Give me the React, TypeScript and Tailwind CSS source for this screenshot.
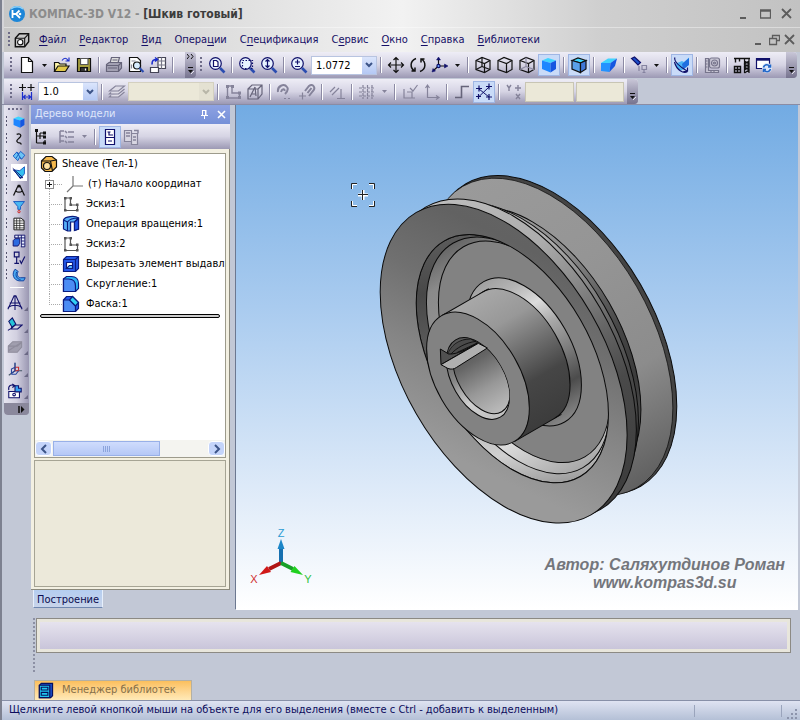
import { ReactNode } from "react";
import clsx from "clsx";

const NAVY = "#10106a";
const GRAY = "#85839a";

// ---- icons, all on an 18x18 grid ----

function Svg({ children, size = 18, color = "#111" }: { children: ReactNode; size?: number; color?: string }) {
  return (
    <svg width={size} height={size} viewBox="0 0 18 18" fill="none" stroke={color} strokeWidth="1.2" className="shrink-0">
      {children}
    </svg>
  );
}

function Lens({ children }: { children?: ReactNode }) {
  return (
    <Svg color={NAVY}>
      <circle cx="7.5" cy="7.5" r="5.8" fill="#e8f2ff" />
      <path d="M12 12l4.5 4.5" strokeWidth="2.6" stroke="#2a4cb0" />
      {children}
    </Svg>
  );
}

// Box seen from the upper left: long front face on the left, narrow side on the right.
function CubeWire({ hidden }: { hidden?: "solid" | "thin" }) {
  return (
    <Svg>
      <path d="M2 4.500L8 1.500l8 3v9l-5.500 3L2 13.500z" />
      <path d="M2 4.500l8.500 3 5.500-3M10.500 7.500v9" />
      {hidden && <path d="M8 1.500v9L2 13.500M8 10.500l8 3" stroke={hidden === "thin" ? "#8a88a0" : "#111"} />}
    </Svg>
  );
}

function CubeSolid({ edges }: { edges?: boolean }) {
  const s = edges ? "#111" : "none";
  return (
    <Svg>
      <path d="M2 4.5L8 2l8 2.5L10.500 7z" fill="#3fd4ff" stroke={s} />
      <path d="M2 4.500l8.500 2.500v9.500L2 13z" fill={edges ? "#5aa0e8" : "#1e86ff"} stroke={s} />
      <path d="M10.500 7L16 4.500V13l-5.500 3.500z" fill={edges ? "#3f78d8" : "#1557e0"} stroke={s} />
    </Svg>
  );
}

const icons = {
  newDoc: <Svg><path d="M3.500 1.500h7l4 4v11h-11z" fill="#fff" /><path d="M10.500 1.500v4h4" /></Svg>,
  open: (
    <Svg>
      <path d="M1.500 15.500v-9h4l1.500 1.500h6v2" fill="#fff6a8" />
      <path d="M1.500 15.500l3.500-5.500h11l-3.500 5.500z" fill="#e0c84a" />
      <path d="M9 4.500c2-3 4.500-3 6 0M16 1.500v3.500h-3.500" stroke="#1c2ecc" />
    </Svg>
  ),
  save: (
    <Svg>
      <path d="M2.500 2.500h13v13h-13z" fill="#a8a040" />
      <path d="M5.500 2.500h7.500v6h-7.500z" fill="#fff" stroke="#555" />
      <path d="M5.500 11.500h7v4h-7z" fill="#333" />
      <path d="M10.500 12.500v2" stroke="#fff" />
    </Svg>
  ),
  print: (
    <Svg color="#66647a">
      <path d="M5 7l1.500-5.500h8L13 7" fill="#ddd" />
      <path d="M1.500 8.500L4 6.500h12.500v5.500l-3 3.500h-12z" fill="#a3a1b3" />
      <path d="M1.500 9.500h12v6M13.500 9.500l3-3M3 12h9M7.500 4h5" />
    </Svg>
  ),
  preview: (
    <Svg>
      <path d="M2.500 1.500h8l3 3v11h-11z" fill="#fff" />
      <path d="M4.500 12.500v-4M4.500 5h4" stroke="#889" />
      <circle cx="10" cy="9.500" r="3.500" fill="#d8ecff" />
      <path d="M12.500 12l4 4" strokeWidth="2.200" stroke="#2a4cb0" />
    </Svg>
  ),
  pages: (
    <Svg color="#445">
      <path d="M9 1.500h7.500v11H9z" fill="#fff" />
      <path d="M12.500 1.500v11M9 5h7.500M9 9h7.500" stroke="#778" />
      <path d="M1.500 11.500h8v5h-8z" fill="#fff" />
      <path d="M3 8.500c0-4 1-5 5-5M6 1.500l2.500 2L6 5.500" stroke="#1c2ecc" strokeWidth="1.600" />
    </Svg>
  ),
  zoomPage: <Lens><path d="M5.500 4.500h3l1.500 1.500v4.500H5.500z" fill="#fff" /></Lens>,
  zoomFrame: <Lens><path d="M4.500 4.500h10v8h-10z" strokeDasharray="1.500 1.500" /></Lens>,
  zoomUpDown: <Lens><path d="M7.500 3.500v8M5.500 5.500l2-2 2 2M5.500 9.500l2 2 2-2" /></Lens>,
  zoomPlus: <Lens><path d="M7.500 3.500v5M5 6h5M5 10.500h5" /></Lens>,
  move: <Svg><path d="M9 2v14M2 9h14M6.500 4L9 1.500 11.500 4M6.500 14L9 16.500l2.500-2.500M4 6.500L1.500 9 4 11.500M14 6.500L16.500 9 14 11.500" /></Svg>,
  rotate: <Svg><path d="M7 2.500C.5 5 1 12 5.500 15M2.500 15h3.500v-3.500M11 15.500c6.500-2.500 6-9.500 1.500-12.500M15.500 3H12v3.500" strokeWidth="1.500" /></Svg>,
  axes: (
    <Svg>
      <path d="M7.500 2.500V10l-5 4.500M7.500 10H14" />
      <path d="M7.500 1l-2 3h4zM17 10l-3.500-2v4zM1 16l1-3.500 2.500 2.500z" fill={NAVY} stroke={NAVY} strokeWidth=".5" />
      <circle cx="7.500" cy="10" r="1.600" fill="#6aa8ff" stroke={NAVY} />
    </Svg>
  ),
  wedge: (
    <Svg>
      <path d="M1 7l7-4.500h9L10.500 7z" fill="#3fd4ff" stroke="none" />
      <path d="M1 7h9.500l-1 9L1 15z" fill="#2492ff" stroke="none" />
      <path d="M10.500 7L17 2.500 15 10l-5.500 6z" fill="#1557e0" stroke="none" />
    </Svg>
  ),
  spot: (
    <Svg color="#8583a0">
      <path d="M1.500 2.500l3-1.500 6 5.500-2.500 2.500z" fill="#1c4fc8" stroke={NAVY} />
      <path d="M9 10v5M12 9.500h4.500v4H12zM14 13.500v3M12.500 16.500h3" />
    </Svg>
  ),
  orbit: (
    <Svg>
      <path d="M3 7.500L9 5l2 1 5-4.500v7L11 13l-3 1.500L4 12z" fill="#4bb4f5" stroke="none" />
      <path d="M9 8l7-6v7l-6 4.500z" fill="#1f6fe0" stroke="none" />
      <path d="M2 1.500c-1.500 3 1.500 7 12 13.500M14.500 15.500h-4M14.500 15.500v-4M1.500 6c2 8 9 12 13 9.500" stroke={NAVY} />
    </Svg>
  ),
  tape: (
    <Svg color="#77758c">
      <path d="M2.500 2.500h3v12h10v2h-13z" fill="#c8c6d4" />
      <rect x="6.500" y="2" width="10" height="10" rx="2" fill="#c8c6d4" />
      <circle cx="11.500" cy="7" r="3" /><circle cx="11.500" cy="7" r="1" /><path d="M2.500 5h2M2.500 8h2M2.500 11h2M8 14.500v2M11 14.500v2" />
    </Svg>
  ),
  crane: (
    <Svg>
      <path d="M1 2.500h16M2.500 2.500v4M1.500 10.500h6v6h-6zM1.500 13.500h6M4.500 10.500v6M6.500 2.500v3" strokeWidth="1.400" />
      <path d="M11.500 2v15M16 2v15M11.500 5l4.500 3-4.500 3 4.500 3-4.500 3M16 5l-4.500 3 4.500 3-4.500 3" />
    </Svg>
  ),
  refresh: (
    <Svg color={NAVY}>
      <path d="M1.500 2.500h13v10h-13z" fill="#fff" /><path d="M1.500 3.500h13" strokeWidth="2.400" />
      <circle cx="12" cy="12" r="5" fill="#dde6fa" stroke="none" />
      <path d="M8.500 11.500c1-3.500 5.500-3.500 6.500-.5M15.500 8.500V11H13M15.500 13c-1 3.500-5.500 3.500-6.500.5M8.500 16v-2.500H11" stroke="#2368c8" strokeWidth="1.500" />
    </Svg>
  ),
  step: (
    <Svg color="#111">
      <path d="M4.500 1v7M1 4.500h7M13 1v7M9.500 4.500h7" />
      <path d="M4.500 9v8M13.500 9v8M5.500 14h7M7.500 12l-2 2 2 2M10.500 12l2 2-2 2" stroke="#1c2ecc" />
    </Svg>
  ),
  layers: <Svg color={GRAY}><path d="M1.500 8l6-5h9l-6 5zM3 9.500L1.500 11h9l6-5M3 12.500l-1.500 1.500h9l6-5" fill="#dddbe6" /></Svg>,
  sketchGray: <Svg color={GRAY}><path d="M3.500 15V3H8v7h7.500v5z" strokeWidth="1.400" /><path d="M2 2h3v3H2zM7 2h3v3H7zM2 13h3v3H2zM14 13h3v3h-3zM14 8.500h3v3h-3z" fill={GRAY} stroke="none" /></Svg>,
  cubeGray: <Svg color="#66647a"><path d="M2 6l4-4h10v9l-4 5H2zM2 6h10v10M12 6l4-4M4 14L9 4M9 4l1 9M5.500 11h4" /></Svg>,
  magnet: <Svg color={GRAY}><path d="M2 9C1 3 8 0 11 4c2 2.500 0 5-2 7M5 9c1-3.500 4-3.500 3.500-1" strokeWidth="2" /><path d="M8 15.500h8" strokeDasharray="2 2" /></Svg>,
  magnetMove: <Svg color={GRAY}><path d="M7 8l4-5c4-3 7 2 4 5L11 13M9.500 10l4-5" strokeWidth="2" /><path d="M4.500 9.500v7M1 13h7" /></Svg>,
  perp: <Svg color={GRAY}><path d="M2 9l5-5M4 12l7-7M9 15.500h8M13 6v9.500" /></Svg>,
  grid: <Svg color={GRAY}><path d="M5 2v14M9.500 2v14M14 2v14M1 5h16M1 9h16M1 13h16" strokeDasharray="3 1" /></Svg>,
  check: <Svg color={GRAY}><path d="M3 6v9h11M6 9h5v6M9 5l3 3 4.500-6" /></Svg>,
  lcs: <Svg color={GRAY}><path d="M4.500 3v11.500H15M2.500 5l2-3 2 3M13 12.500l3 2-3 2" /></Svg>,
  stair: <Svg color="#66647a"><path d="M2 14.500h6.500v-11H16" strokeWidth="1.600" /></Svg>,
  param: (
    <Svg color={NAVY}>
      <path d="M1 5.500h6M4 2.500v6M11 3.500h6M14 .5v6M1 13.500h5M3.500 11v5M11 14h6M14 11v6" />
      <path d="M4 6l10 8M4 13.500L14 4" strokeWidth="1" />
    </Svg>
  ),
  xy: <Svg color={GRAY}><path d="M2 2l2 3 2-3M4 5v3M13 2v6M10 5h6M11 11l4 5M15 11l-4 5" strokeWidth="1.400" /></Svg>,
};

const sideIcons: { name: string; icon: ReactNode; active?: boolean }[] = [
  { name: "Редактирование детали", icon: <CubeSolid /> },
  { name: "Пространственные кривые", icon: <Svg><path d="M6 3c4-2 7 1 4 4s-5 4-3 6 4 0 5 3" strokeWidth="1.600" /></Svg> },
  {
    name: "Поверхности",
    icon: <Svg color="#1557c0"><path d="M1.500 9L6 4l3 2 2-3 5.500 5-4 5-3-2-2 4z" fill="#6cc4f5" /><path d="M6 4l6 9M9 6l-4 6" /></Svg>,
  },
  {
    name: "Вспомогательная геометрия",
    active: true,
    icon: <Svg color="#1557c0"><path d="M2 5l8 1 6-5v9l-5 6z" fill="#36c0f0" /><path d="M1 3l13 12M2 5l9 11M14 15H9" stroke={NAVY} /></Svg>,
  },
  { name: "Измерения", icon: <Svg><path d="M2 16L8 3h2l6 13M5 10c2 2.500 6 2.500 8 0M9 3v3" strokeWidth="1.600" /></Svg> },
  {
    name: "Фильтры",
    icon: <Svg color="#1557c0"><path d="M2 2h14l-5 6.500V12H7.500V8.500z" fill="#49b8f2" /><circle cx="9" cy="15" r="1.500" stroke="#d02020" /></Svg>,
  },
  { name: "Спецификация", icon: <Svg><path d="M2.500 1.500h9l4 3v12h-13z" fill="#fff" /><path d="M2.500 5h13M2.500 8h13M2.500 11h13M2.500 14h13M6 2v14M10 2v14" strokeWidth=".9" /></Svg> },
  {
    name: "Отчеты",
    icon: <Svg color={NAVY}><path d="M3.500 1.500h13v15h-5M3.500 1.500v4M3.500 5h13M8 1.500V5M12 1.500v15M12 9h4M12 13h4" fill="#e8f0ff" /><path d="M1.500 8.500L4 6h6v6l-2.500 3.500h-6z" fill="#2c6ae0" /></Svg>,
  },
  { name: "Элементы оформления", icon: <Svg color={NAVY}><path d="M3 1.500h6v6H3zM6 7.500V16M3 16h6M10 12l2 4 4.500-9" strokeWidth="1.500" /></Svg> },
  { name: "Листовое тело", icon: <Svg color="#0c3c9c"><path d="M4 1.500c-5 6-2 14 5 15h6l2-4H11c-4 0-5-5-3-8z" fill="#4aa8f0" /><path d="M6 5c-2 5 0 9 5 10" /></Svg> },
];

const sideTools: { name: string; icon: ReactNode }[] = [
  { name: "Плоскость", icon: <Svg color={NAVY}><path d="M1 16L8 1h2l7 15M3 9h12M9 1v16M1 14c5-3 11-3 16 0" /></Svg> },
  { name: "Смещенная плоскость", icon: <Svg color={NAVY}><path d="M2 5l4-4 4 7-4 4z" fill="#26c4d8" /><path d="M5 12l4-3h8l-5 4.500H5zM1 15l5-3" /></Svg> },
  { name: "Линия разъема", icon: <Svg color="#8e8c9c"><path d="M1.500 8l5-5h10v6l-5 6h-10z" fill="#a09eae" /><path d="M2 13L16 4M1.500 8h10l5-4" /></Svg> },
  { name: "Локальная система координат", icon: <Svg color="#26449c"><path d="M9 2v9h8M9 11l-7 5" stroke="#456" /><path d="M9 7h4v4H9z" stroke="#cc3030" /><path d="M9 2v9l-4 3V9l4-2M13 11l-3 4H5" stroke="#26449c" /></Svg> },
  { name: "Деталь-заготовка", icon: <Svg color={NAVY}><path d="M2 9.500h12v7H2z" fill="#fff" /><path d="M2 8c-1-5 3-7 6-5M6 1l3 2-3 2" /><path d="M9 3h4v3h3v4H9z" fill="#36a0f0" /><circle cx="8" cy="13" r="1.500" /></Svg> },
];

// ---- toolbar parts ----

function Tool({ name, children, active }: { name: string; children: ReactNode; active?: boolean }) {
  return (
    <button
      type="button"
      aria-label={name}
      className={clsx(
        "flex h-[22px] w-[22px] shrink-0 items-center justify-center",
        active && "border border-[#9fb6e4] bg-[#c9dbf8]"
      )}
    >
      {children}
    </button>
  );
}

function Sep() {
  return <span className="mx-[3px] h-4 w-[2px] shrink-0 border-l border-[#8c8aa4] bg-white" />;
}

function Grip() {
  return <span className="mx-1 h-4 w-[2px] shrink-0 bg-[repeating-linear-gradient(#6e6c88_0_2px,transparent_2px_4px)]" />;
}

function Caret({ name, gray }: { name: string; gray?: boolean }) {
  return (
    <button type="button" aria-label={name} className="flex h-[22px] w-[13px] shrink-0 items-center justify-center">
      <svg width="5" height="3" viewBox="0 0 5 3"><path d="M0 0h5L2.500 3z" fill={gray ? GRAY : "#111"} /></svg>
    </button>
  );
}

function Overflow({ more }: { more?: boolean }) {
  return (
    <button
      type="button"
      aria-label="Другие кнопки"
      className="flex w-[11px] shrink-0 flex-col items-center justify-end gap-2 self-stretch rounded-r bg-gradient-to-b from-[#c9c7d8] to-[#77748f] pb-1"
    >
      {more && <svg width="7" height="5" viewBox="0 0 7 5"><path d="M0 0l2 2.500L0 5M4 0l2 2.500L4 5" stroke="#111" fill="none" /></svg>}
      <svg width="7" height="7" viewBox="0 0 7 7"><path d="M1 .5h5" stroke="#111" /><path d="M1 3h5L3.500 6z" fill="#111" /><path d="M4 7l3-3" stroke="#fff" strokeWidth=".8" /></svg>
    </button>
  );
}

function Combo({ label, value, className, disabled }: { label: string; value: string; className: string; disabled?: boolean }) {
  return (
    <div className={clsx("relative shrink-0", className)}>
      <select
        aria-label={label}
        disabled={disabled}
        className={clsx(
          "block h-[19px] w-full appearance-none border pl-1 text-[11px] leading-none text-black",
          disabled ? "border-[#d4d0c0] bg-[#ebe8d8]" : "border-[#b8c4e0] bg-white"
        )}
      >
        <option>{value}</option>
      </select>
      <span
        className={clsx(
          "pointer-events-none absolute inset-y-[1px] right-[1px] flex w-[14px] items-center justify-center",
          disabled ? "bg-[#e4e1d2]" : "bg-gradient-to-b from-[#dbe5fc] to-[#b4c8f4]"
        )}
      >
        <svg width="8" height="6" viewBox="0 0 8 6"><path d="M1 1l3 3 3-3" fill="none" stroke={disabled ? "#b8b6a8" : "#3c5488"} strokeWidth="2" /></svg>
      </span>
    </div>
  );
}

const barClass = "flex items-center bg-gradient-to-b from-[#eeedf6] via-[#d6d4e4] to-[#9c99b4]";

function WinButton({ name, children }: { name: string; children: ReactNode }) {
  return (
    <button type="button" aria-label={name}>
      <svg width="11" height="12" viewBox="0 0 11 12" fill="none" stroke="#5c5c5c" strokeWidth="1.300">{children}</svg>
    </button>
  );
}

function TitleBar() {
  return (
    <div className="flex h-[27px] items-center pl-[3px] pr-2">
      <svg width="20" height="20" viewBox="0 0 20 20">
        <circle cx="10" cy="10" r="8" fill="#1c86d8" />
        <path d="M4 5c3-3 9-3 12 0" stroke="#8cd0f8" strokeWidth="1.500" fill="none" />
        <path d="M5.500 6v8M5.500 10h3M12.500 6.500L9 10l4 4" stroke="#fff" strokeWidth="1.800" fill="none" />
        <circle cx="13" cy="10" r="1.300" fill="#fff" />
      </svg>
      <h1 className="ml-[2px] text-[12px] font-bold text-[#3c3c3c]">
        <span className="text-[#8c8c8c]">КОМПАС-3D V12 - </span>[Шкив готовый]
      </h1>
      <div className="ml-auto flex items-center gap-[10px]">
        <WinButton name="Свернуть"><path d="M1 9h6v2H1z" fill="#5c5c5c" stroke="none" /></WinButton>
        <WinButton name="Развернуть"><path d="M.5 2h10v8H.5zM.5 3h10" /></WinButton>
        <WinButton name="Закрыть"><path d="M1 1l9 9M10 1l-9 9" strokeWidth="1.800" /></WinButton>
      </div>
    </div>
  );
}

const menus = [
  ["", "Ф", "айл"],
  ["", "Р", "едактор"],
  ["", "В", "ид"],
  ["Опера", "ц", "ии"],
  ["С", "п", "ецификация"],
  ["С", "е", "рвис"],
  ["", "О", "кно"],
  ["", "С", "правка"],
  ["", "Б", "иблиотеки"],
];

function MenuBar() {
  return (
    <nav className="flex h-[25px] items-center border-t border-white/40 pr-[5px]">
      <Grip />
      <Svg size={16}>
        <path d="M1.500 7L6 2h10.500v9L12 16.500H1.500z" fill="#c8c8c8" strokeWidth="1.600" /><path d="M1.500 7H12v9.500" /><circle cx="7" cy="11.500" r="3" fill="#fff" /><path d="M12 7l4.500-5" />
      </Svg>
      <div className="ml-[9px] flex gap-[13px]">
        {menus.map(([a, u, b]) => (
          <button key={a + u + b} type="button" className="text-[11px] text-[#160f66]">
            {a}<u className="underline-offset-2">{u}</u>{b}
          </button>
        ))}
      </div>
      <div className="ml-auto flex items-center gap-1">
        <WinButton name="Свернуть документ"><path d="M1 9h6v2H1z" fill="#5c5c5c" stroke="none" /></WinButton>
        <WinButton name="Восстановить документ"><path d="M3.500 4V1.500h7v5H8M.5 4.500h7v6h-7z" /></WinButton>
        <WinButton name="Закрыть документ"><path d="M1 1l9 9M10 1l-9 9" strokeWidth="1.800" /></WinButton>
      </div>
    </nav>
  );
}

function MainToolbar() {
  return (
    <div className={clsx(barClass, "h-[26px] rounded-r pl-[2px]")}>
      <Grip />
      <Tool name="Создать">{icons.newDoc}</Tool>
      <Caret name="Создать: варианты" />
      <Tool name="Открыть">{icons.open}</Tool>
      <Tool name="Сохранить">{icons.save}</Tool>
      <Sep />
      <Tool name="Печать">{icons.print}</Tool>
      <Tool name="Просмотр">{icons.preview}</Tool>
      <Tool name="Менеджер документа">{icons.pages}</Tool>
      <Sep />
      <span className="w-2" />
      <Overflow more />
      <Grip />
      <Tool name="Показать все">{icons.zoomPage}</Tool>
      <Sep />
      <Tool name="Увеличить рамкой">{icons.zoomFrame}</Tool>
      <Tool name="Приблизить">{icons.zoomUpDown}</Tool>
      <Sep />
      <Tool name="Масштаб">{icons.zoomPlus}</Tool>
      <Combo label="Текущий масштаб" value="1.0772" className="ml-px w-[66px]" />
      <Sep />
      <Tool name="Сдвинуть">{icons.move}</Tool>
      <Tool name="Повернуть">{icons.rotate}</Tool>
      <Tool name="Ориентация">{icons.axes}</Tool>
      <Caret name="Ориентация: варианты" />
      <Sep />
      <Tool name="Каркас"><CubeWire hidden="solid" /></Tool>
      <Tool name="Без невидимых линий"><CubeWire /></Tool>
      <Tool name="Невидимые линии тонкие"><CubeWire hidden="thin" /></Tool>
      <Tool name="Полутоновое" active><CubeSolid /></Tool>
      <Sep />
      <Tool name="Полутоновое с каркасом" active><CubeSolid edges /></Tool>
      <Sep />
      <Tool name="Перспектива">{icons.wedge}</Tool>
      <Sep />
      <Tool name="Освещение">{icons.spot}</Tool>
      <Caret name="Освещение: варианты" />
      <Sep />
      <Tool name="Упрощенное отображение" active>{icons.orbit}</Tool>
      <Sep />
      <Tool name="Размеры">{icons.tape}</Tool>
      <Sep />
      <Tool name="Перестроить">{icons.crane}</Tool>
      <Tool name="Обновить">{icons.refresh}</Tool>
      <span className="ml-auto flex self-stretch"><Overflow /></span>
    </div>
  );
}

function StateToolbar() {
  const field = "h-[20px] shrink-0 border border-[#c8c5b4] bg-[#ebe8d8]";
  return (
    <div className="flex">
      <div className={clsx(barClass, "h-[25px] rounded-r pl-[2px]")}>
        <Grip />
        <Tool name="Шаг курсора">{icons.step}</Tool>
        <Combo label="Шаг" value="1.0" className="w-[60px]" />
        <Sep />
        <Tool name="Слои">{icons.layers}</Tool>
        <Combo label="Слой" value="" className="w-[86px]" disabled />
        <Sep />
        <Tool name="Эскиз">{icons.sketchGray}</Tool>
        <Tool name="Редактировать деталь">{icons.cubeGray}</Tool>
        <Sep />
        <Tool name="Привязки">{icons.magnet}</Tool>
        <Tool name="Запретить привязки">{icons.magnetMove}</Tool>
        <Sep />
        <Tool name="Ортогонально">{icons.perp}</Tool>
        <Sep />
        <Tool name="Сетка">{icons.grid}</Tool>
        <Caret name="Сетка: варианты" gray />
        <Sep />
        <Tool name="Проверка">{icons.check}</Tool>
        <Tool name="Локальная СК">{icons.lcs}</Tool>
        <Sep />
        <Tool name="Округление">{icons.stair}</Tool>
        <Tool name="Параметрический режим" active>{icons.param}</Tool>
        <Sep />
        <Tool name="Координаты">{icons.xy}</Tool>
        <input aria-label="Координата X" disabled className={clsx(field, "w-[49px]")} />
        <input aria-label="Координата Y" disabled className={clsx(field, "ml-[2px] w-[48px]")} />
        <span className="w-[3px]" />
        <Overflow />
      </div>
    </div>
  );
}

function SideBar() {
  return (
    <div className="flex w-[25px] shrink-0 flex-col self-start rounded-b bg-gradient-to-r from-[#e6e5f0] via-[#d2d0e0] to-[#9a97b2]">
      <span className="mx-1 mb-[3px] mt-[3px] h-[2px] w-4 bg-[repeating-linear-gradient(90deg,#6e6c88_0_2px,transparent_2px_4px)]" />
      {sideIcons.map((t) => (
        <button key={t.name} type="button" aria-label={t.name} className="flex h-[17px] items-center gap-[4px] pl-[2px]">
          <span className="h-3 w-px shrink-0 bg-[repeating-linear-gradient(#55536e_0_2px,transparent_2px_4px)]" />
          <span className={clsx("flex h-[17px] w-4 items-center justify-center", t.active && "bg-white")}>
            {/* the side icons are drawn a bit smaller than the toolbar ones */}
            <span className="flex w-[14px] [&>svg]:h-[14px] [&>svg]:w-[14px]">{t.icon}</span>
          </span>
        </button>
      ))}
      <span className="my-1 ml-[6px] h-px w-[14px] bg-white" />
      {sideTools.map((t) => (
        <button key={t.name} type="button" aria-label={t.name} className="flex h-[22px] items-center gap-px pl-[3px]">
          <span className="flex [&>svg]:h-4 [&>svg]:w-4">{t.icon}</span>
          <svg width="4" height="4" viewBox="0 0 4 4" className="mb-[3px] self-end"><path d="M4 0v4H0z" fill="#6a6884" /></svg>
        </button>
      ))}
      <button type="button" aria-label="Развернуть панель" className="mt-px flex h-3 items-center justify-end rounded-b bg-[#8a889c] pr-1">
        <svg width="7" height="7" viewBox="0 0 7 7"><path d="M1 0v7" stroke="#111" strokeWidth="1.500" /><path d="M3 0l3.500 3.500L3 7z" fill="#111" /></svg>
      </button>
    </div>
  );
}

// ---- model tree ----

const sketchIcon = (
  <Svg color="#555">
    <path d="M3 15.500V3h5.500v7h7v5.500z" />
    <path d="M2 2h2.500v2.500H2zM7.500 2H10v2.500H7.500zM2 14h2.500v2.500H2zM14 14h2.500v2.500H14zM14 8.500h2.500V11H14zM7.500 8.500H10V11H7.500z" fill="#555" stroke="none" />
  </Svg>
);

const tree: { label: string; icon: ReactNode }[] = [
  { label: "Эскиз:1", icon: sketchIcon },
  {
    label: "Операция вращения:1",
    icon: (
      <Svg color="#0a1c80">
        <path d="M1.500 5c1-4 12-4.500 15-2v11l-4 1.500V7h-4v9H5.500L1.500 14z" fill="#58b0f8" />
        <path d="M1.500 5l4 2v9M5.500 7c2-3 6-4 11-4M8.500 7v9M12.500 7l4-4" />
        <path d="M12.500 7l4-3.500v10.500l-4 1.500z" fill="#2458e8" />
      </Svg>
    ),
  },
  { label: "Эскиз:2", icon: sketchIcon },
  {
    label: "Вырезать элемент выдавл",
    icon: (
      <Svg color="#0a1c80">
        <path d="M1.500 4.500l3-3h12v12l-3 3h-12z" fill="#2458e8" />
        <path d="M1.500 4.500h12v12M13.500 4.500l3-3" /><path d="M4.500 7.500h6v6h-6z" fill="#fff" /><path d="M4.500 13.500l3-3h3v3z" fill="#58b8ff" />
      </Svg>
    ),
  },
  {
    label: "Скругление:1",
    icon: (
      <Svg color="#0a1c80">
        <path d="M1.500 4l3-2.500h5c4.500 0 7 3 7 7v5l-3 3h-12z" fill="#2cb4f8" />
        <path d="M1.500 4h5c5 0 7 3 7 7v5.500h-12z" fill="#4c8cf4" />
      </Svg>
    ),
  },
  {
    label: "Фаска:1",
    icon: (
      <Svg color="#0a1c80">
        <path d="M1.500 5l3-3.500h6l6 6v6l-3 3h-12z" fill="#2458e8" />
        <path d="M1.500 5h6l6 6v5.500h-12z" fill="#4c8cf4" /><path d="M7.500 5l3-3.500 6 6-3 3.500z" fill="#30d0f4" />
      </Svg>
    ),
  },
];

function ScrollArrow({ name, d }: { name: string; d: string }) {
  return (
    <button type="button" aria-label={name} className="flex h-[15px] w-[17px] items-center justify-center rounded-sm border border-white bg-[#c4d4fa]">
      <svg width="8" height="10" viewBox="0 0 8 10"><path d={d} fill="none" stroke="#3c5488" strokeWidth="2" /></svg>
    </button>
  );
}

function ModelTree() {
  return (
    <div className="flex min-h-0 flex-1 flex-col border border-[#9d9b8c] bg-white">
      <ul className="min-h-0 flex-1 pl-[5px] text-[11px] text-black">
        <li className="flex h-5 items-center gap-1">
          <Svg>
            <path d="M1.500 6L6 1.500h6L16.500 5v7L12 16.500H5L1.500 13z" fill="#f4b84c" /><path d="M1.500 6h9l6-1M10.500 6l2 10" /><circle cx="7" cy="11" r="3.500" fill="#ffe2a0" />
          </Svg>
          Sheave (Тел-1)
        </li>
        <li className="ml-[9px] flex h-5 items-center border-l border-dotted border-[#aaa]">
          <button type="button" aria-label="Раскрыть" className="-ml-[5px] flex h-[9px] w-[9px] shrink-0 items-center justify-center border border-[#8a8a8a] bg-white">
            <svg width="5" height="5" viewBox="0 0 5 5"><path d="M2.500 0v5M0 2.500h5" stroke="#111" /></svg>
          </button>
          <span className="mr-1 w-2 shrink-0 border-t border-dotted border-[#aaa]" />
          <Svg color="#777"><path d="M7 1v10h10M7 11l-6 6" /></Svg>
          <span className="ml-1 whitespace-nowrap">(т) Начало координат</span>
        </li>
        {tree.map((n, i) => (
          <li key={n.label} className="ml-[9px] flex h-5 items-center whitespace-nowrap">
            <span className="h-[11px] w-[13px] shrink-0 self-start border-b border-l border-dotted border-[#aaa]" />
            {i < tree.length - 1 && <span className="-ml-[13px] mr-[12px] h-[9px] w-px shrink-0 self-end border-l border-dotted border-[#aaa]" />}
            {n.icon}
            <span className="ml-[6px]">{n.label}</span>
          </li>
        ))}
        <li className="mr-[5px] h-1 rounded-full border border-black bg-[#ccc]" />
      </ul>
      <div className="flex h-[17px] shrink-0 items-center bg-[#f4f4f0]">
        <ScrollArrow name="Влево" d="M6 1L2 5l4 4" />
        <div className="ml-px flex h-[15px] w-[107px] items-center justify-center gap-px border border-[#98b0e8] bg-gradient-to-b from-[#cfdcfd] to-[#b5c8f6]">
          {[0, 1, 2, 3].map((i) => <span key={i} className="h-[6px] w-px bg-[#8ca4dc]" />)}
        </div>
        <span className="flex-1" />
        <ScrollArrow name="Вправо" d="M2 1l4 4-4 4" />
      </div>
    </div>
  );
}

function TreePanel() {
  return (
    <section className="flex w-[199px] shrink-0 flex-col">
      <header className="flex h-[19px] shrink-0 items-center bg-gradient-to-b from-[#8ea2e2] to-[#7590d8] px-1 text-[11px] text-[#dfe6fa]">
        <h2>Дерево модели</h2>
        <button type="button" aria-label="Закрепить" className="ml-auto">
          <svg width="9" height="9" viewBox="0 0 9 9" fill="none" stroke="#fff"><path d="M2.500 0v5M2 .5h4M5.500 0v5M6 0v5M1 5.500h7M4.500 6v3" /></svg>
        </button>
        <button type="button" aria-label="Закрыть панель" className="ml-2">
          <svg width="9" height="9" viewBox="0 0 9 9" stroke="#fff" strokeWidth="1.600"><path d="M1 1l7 7M8 1L1 8" /></svg>
        </button>
      </header>
      <div className={clsx(barClass, "h-[25px] shrink-0")}>
        <Tool name="Структура"><Svg><path d="M3.500 2v13M3.500 8h7M3.500 15h7M7 5v6M7 5h4M12 12v4" /><path d="M2 1h3v3H2zM10 3.500h3v3h-3zM10 7.500h3v3h-3zM10 13.500h3v3h-3z" fill="#111" stroke="none" /></Svg></Tool>
        <span className="w-[3px]" />
        <Tool name="Состав"><Svg color={GRAY}><path d="M2 3h4M2 8h4M2 13h4M2 3v12M10 4h6M10 9h6M10 14h6M7 3l2 2M7 8l2 2M7 13l2 2" strokeWidth="1.500" /></Svg></Tool>
        <Caret name="Состав: варианты" gray />
        <Sep />
        <Tool name="Отношения" active><Svg color={NAVY}><path d="M4.500 1.500h9v15h-9zM4.500 9.500h9" fill="#fff" /><path d="M6.500 4h3M8 4v3h4M7 13h4" /></Svg></Tool>
        <Tool name="Дополнительное окно"><Svg color={GRAY}><path d="M1.500 2.500h7v11h-7zM8.500 5.500h6v11h-6z" fill="#d8d6e2" /><path d="M3 5h4M3 8h4M10 9h3M10 12h3M11 2.500h4v3" strokeWidth="1.500" /></Svg></Tool>
      </div>
      <div className="flex min-h-0 flex-1 flex-col gap-[2px] border-b border-r border-[#8c8a7c] bg-[#f3f0e2] px-[3px] pb-[2px] pt-1">
        <ModelTree />
        <div className="h-[127px] shrink-0 border border-[#a6a494] bg-[#ece9da]" />
      </div>
      <div className="flex h-[20px] shrink-0 items-start pl-[2px]">
        <button type="button" className="h-[18px] border border-t-0 border-[#e6effc] border-b-[#7088b0] bg-gradient-to-b from-[#b4cdf0] to-[#c8d4ea] px-[3px] pt-[2px] text-[11px] leading-[14px] text-[#0c0c50]">
          Построение
        </button>
      </div>
    </section>
  );
}

// ---- 3D view ----

// Isometric circle of radius a, shifted by d along the wheel axis.
function Ring({ a, d, fill = "none", sw = 3 }: { a: number; d: number; fill?: string; sw?: number }) {
  const cx = 401 + d * 0.866;
  const cy = 596 - d * 0.5;
  return (
    <ellipse
      cx={cx}
      cy={cy}
      rx={a}
      ry={a * 0.577}
      transform={`rotate(60 ${cx} ${cy})`}
      fill={fill}
      stroke="#0a0a0a"
      strokeWidth={sw}
    />
  );
}

// Box units of the unrotated ellipse: x runs along the long axis, y towards the viewer's lower left.
function Grad({ id, stops, x1 = 0, x2 = 1, y1 = 0, y2 = 0 }: { id: string; stops: [number, string][]; x1?: number; x2?: number; y1?: number; y2?: number }) {
  return (
    <linearGradient id={id} x1={x1} x2={x2} y1={y1} y2={y2}>
      {stops.map(([o, c]) => <stop key={o} offset={o} stopColor={c} />)}
    </linearGradient>
  );
}

function Pulley() {
  return (
    <svg className="absolute left-[134px] top-[60px] h-[370px] w-[320px]" viewBox="0 0 960 1110">
      <defs>
        <Grad id="back" stops={[[0, "#9a9a9a"], [0.35, "#959595"], [0.7, "#8c8c8c"], [0.85, "#767676"], [1, "#606060"]]} />
        <Grad id="groove" stops={[[0, "#a0a0a0"], [0.3, "#8c8c8c"], [0.45, "#626262"], [0.6, "#444"], [0.75, "#3c3c3c"], [1, "#555"]]} />
        <Grad id="rim" stops={[[0, "#bcbcbc"], [0.25, "#acacac"], [0.4, "#8a8a8a"], [0.55, "#666"], [0.7, "#4a4a4a"], [1, "#3c3c3c"]]} />
        <Grad id="face" stops={[[0, "#666"], [0.2, "#626262"], [0.4, "#707070"], [0.6, "#858585"], [0.85, "#9a9a9a"], [1, "#9a9a9a"]]} x1={0} y1={0} x2={1} y2={0.85} />
        <Grad id="lip" stops={[[0, "#5c5c5c"], [0.2, "#484848"], [0.42, "#5c5c5c"], [0.55, "#8a8a8a"], [0.7, "#b8b8b8"], [0.85, "#d0d0d0"], [1, "#9a9a9a"]]} y1={0.4} y2={0.6} />
        <Grad id="wall" stops={[[0, "#666"], [0.12, "#8a8a8a"], [0.35, "#949494"], [0.6, "#a8a8a8"], [0.78, "#dcdcdc"], [1, "#a8a8a8"]]} />
        <Grad id="fillet" stops={[[0, "#a0a0a0"], [0.12, "#b4b4b4"], [0.27, "#dcdcdc"], [0.42, "#a8a8a8"], [0.6, "#808080"], [0.8, "#4c4c4c"], [1, "#888"]]} />
        <Grad id="hub" stops={[[0, "#a8a8a8"], [0.25, "#989898"], [0.5, "#6a6a6a"], [0.7, "#464646"], [1, "#3c3c3c"]]} />
        <Grad id="bore" stops={[[0, "#4c4c4c"], [0.3, "#666"], [0.65, "#989898"], [1, "#bcbcbc"]]} />
        <Grad id="chamfer" stops={[[0, "#555"], [0.4, "#888"], [0.7, "#d0d0d0"], [1, "#c0c0c0"]]} />
        <clipPath id="recess"><ellipse cx="427" cy="581" rx="408" ry="235" transform="rotate(60 427 581)" /></clipPath>
        <clipPath id="hole"><ellipse cx="324" cy="641" rx="134" ry="77" transform="rotate(60 324 641)" /></clipPath>
      </defs>

      <Ring a={524} d={172} fill="#444" />
      <Ring a={522} d={160} fill="url(#back)" sw={2} />
      <Ring a={460} d={100} fill="url(#groove)" />
      <Ring a={496} d={62} fill="url(#rim)" />
      <Ring a={524} d={32} fill="url(#rim)" />
      <Ring a={524} d={0} fill="url(#face)" />

      <g clipPath="url(#recess)">
        <Ring a={408} d={30} fill="url(#lip)" />
        <Ring a={389} d={50} fill="url(#wall)" />
        <Ring a={364} d={71} fill="#828282" />
      </g>
      <Ring a={408} d={30} />

      <Ring a={243} d={71} fill="url(#fillet)" />
      <Ring a={218} d={52} fill="url(#hub)" />
      <g transform="rotate(60 324 641)">
        <path d="M106 641V500H542V641z" fill="url(#hub)" />
        <path d="M106 641V478M542 641V478" stroke="#0a0a0a" strokeWidth="3" />
      </g>
      <Ring a={218} d={-89} fill="#828282" />

      <Ring a={134} d={-89} fill="url(#chamfer)" />
      <g clipPath="url(#hole)">
        <Ring a={122} d={-77} fill="url(#bore)" />
        <path d="M232 570c10-30 35-48 70-48l45 25-110 64z" fill="#4a4a4a" stroke="#0a0a0a" strokeWidth="2" />
        <path d="M243 567c16-18 44-34 75-38M262 562l64-30" stroke="#0a0a0a" strokeWidth="2.500" fill="none" />
      </g>
      <path d="M211 552l25 15c25 2 52-14 86-32l-109 64z" fill="#505050" stroke="#0a0a0a" strokeWidth="3" />
      <path d="M213 599l112-64 27 14-92 58c-8 6-18 7-27 3z" fill="#b0b0b0" stroke="#0a0a0a" strokeWidth="3" />
    </svg>
  );
}

function Viewport() {
  return (
    <main className="relative min-w-0 flex-1 overflow-hidden border-b border-l border-b-white border-l-[#6c7890] bg-[linear-gradient(#72abe3,#a9cbef_40%,#dce9f8_75%,#ffffff)]">
      <svg className="absolute left-[115px] top-[78px]" width="24" height="24" viewBox="0 0 24 24" fill="none">
        <path d="M1.500 6V1.500H6M18 1.500h4.500V6M22.500 18v4.500H18M6 22.500H1.500V18" stroke="#fff" />
        <path d="M.5 6V.5H6M18 .5h5.500V6M23.500 18v5.500H18M6 23.500H.5V18" stroke="#222" />
        <path d="M12 7v10M7 12h10" stroke="#fff" strokeWidth="3" />
        <path d="M11.500 7v10M7 11.500h10" stroke="#222" />
      </svg>
      <Pulley />
      <svg className="absolute bottom-[20px] left-[12px]" width="66" height="64" viewBox="0 0 66 64">
        <path d="M33 38V22" stroke="#1670b0" strokeWidth="4" />
        <path d="M33 14l3.500 10h-7z" fill="#1c86c8" />
        <path d="M33 38l-12 6" stroke="#b01414" strokeWidth="4" />
        <path d="M11 50l8-9 4 6z" fill="#d01818" />
        <path d="M33 38l12 6" stroke="#18a028" strokeWidth="4" />
        <path d="M55 50l-8.500-9-4 6z" fill="#20d020" />
        <g className="font-['Liberation_Sans',sans-serif] text-[11px]" textAnchor="middle">
          <text x="33" y="12" fill="#2c9cd4">Z</text>
          <text x="6" y="58" fill="#d03030">X</text>
          <text x="60" y="58" fill="#30c040">Y</text>
        </g>
      </svg>
      <p className="absolute bottom-[17px] right-[13px] text-center font-['Liberation_Sans',Arial,sans-serif] text-[16px] font-bold italic leading-[18px] text-[#74767c]">
        Автор: Саляхутдинов Роман
        <br />
        www.kompas3d.su
      </p>
    </main>
  );
}

export default function App() {
  return (
    <div className="flex h-screen min-h-[480px] flex-col overflow-hidden border-l-2 border-[#7d8190] bg-[#c2c8d6] font-['DejaVu_Sans_Condensed','DejaVu_Sans',Tahoma,sans-serif]">
      <div className="shrink-0 border-l-2 border-[#d4d4d8] bg-[linear-gradient(90deg,#c6c6c6,#dcdcdc_25%,#f2f2f2_50%,#cfcfcf_75%,#c2c2c2)]">
        <TitleBar />
        <MenuBar />
      </div>
      <div className="flex shrink-0 flex-col gap-px border-b border-[#8a8ca4] pl-[2px] pr-[3px]">
        <MainToolbar />
        <StateToolbar />
      </div>
      <div className="flex min-h-0 flex-1 pl-[2px] pr-[2px]">
        <SideBar />
        <span className="w-[2px]" />
        <TreePanel />
        <span className="w-[5px]" />
        <Viewport />
      </div>
      <div className="mt-2 flex shrink-0 pl-[31px] pr-[9px]">
        <span className="h-[54px] w-[2px] bg-[repeating-linear-gradient(#8c90a4_0_2px,transparent_2px_4px)]" />
        <div className="ml-px h-[35px] flex-1 border-4 border-[#e8e6dc] bg-gradient-to-b from-[#e6e3ee] to-[#c9c5da] outline outline-1 -outline-offset-1 outline-[#8c8a84]" />
      </div>
      <div className="mt-2 flex shrink-0 pl-[32px]">
        <button type="button" className="flex h-5 w-[158px] items-center border border-b-0 border-[#b4b0a4] bg-gradient-to-b from-[#fbbf5c] to-[#ffeab8] pl-[2px] text-[11px] text-[#86704a]">
          <Svg size={17} color="#08105c"><path d="M2.500 3.500l2-2h12v13l-2 2h-12z" fill="#1848c0" /><path d="M2.500 3.500h11v13h-11z" fill="#20c8f0" /><path d="M4.500 5.500h7v3h-7zM4.500 11h7v3h-7z" /></Svg>
          <span className="ml-2">Менеджер библиотек</span>
        </button>
      </div>
      <footer className="flex h-5 shrink-0 items-center border-t border-[#8890a8] bg-gradient-to-b from-[#dfe3f2] to-[#b4c0d6] pl-[7px] text-[11px] text-[#0c0c5c]">
        Щелкните левой кнопкой мыши на объекте для его выделения (вместе с Ctrl - добавить к выделенным)
        <span className="ml-auto h-3 w-[88px] border-x border-[#9aa4bc]" />
        <svg className="ml-1 mr-[2px] self-end" width="12" height="12" viewBox="0 0 12 12" fill="#8c94ac">
          <path d="M9 1h2v2H9zM9 5h2v2H9zM9 9h2v2H9zM5 5h2v2H5zM5 9h2v2H5zM1 9h2v2H1z" />
        </svg>
      </footer>
    </div>
  );
}
